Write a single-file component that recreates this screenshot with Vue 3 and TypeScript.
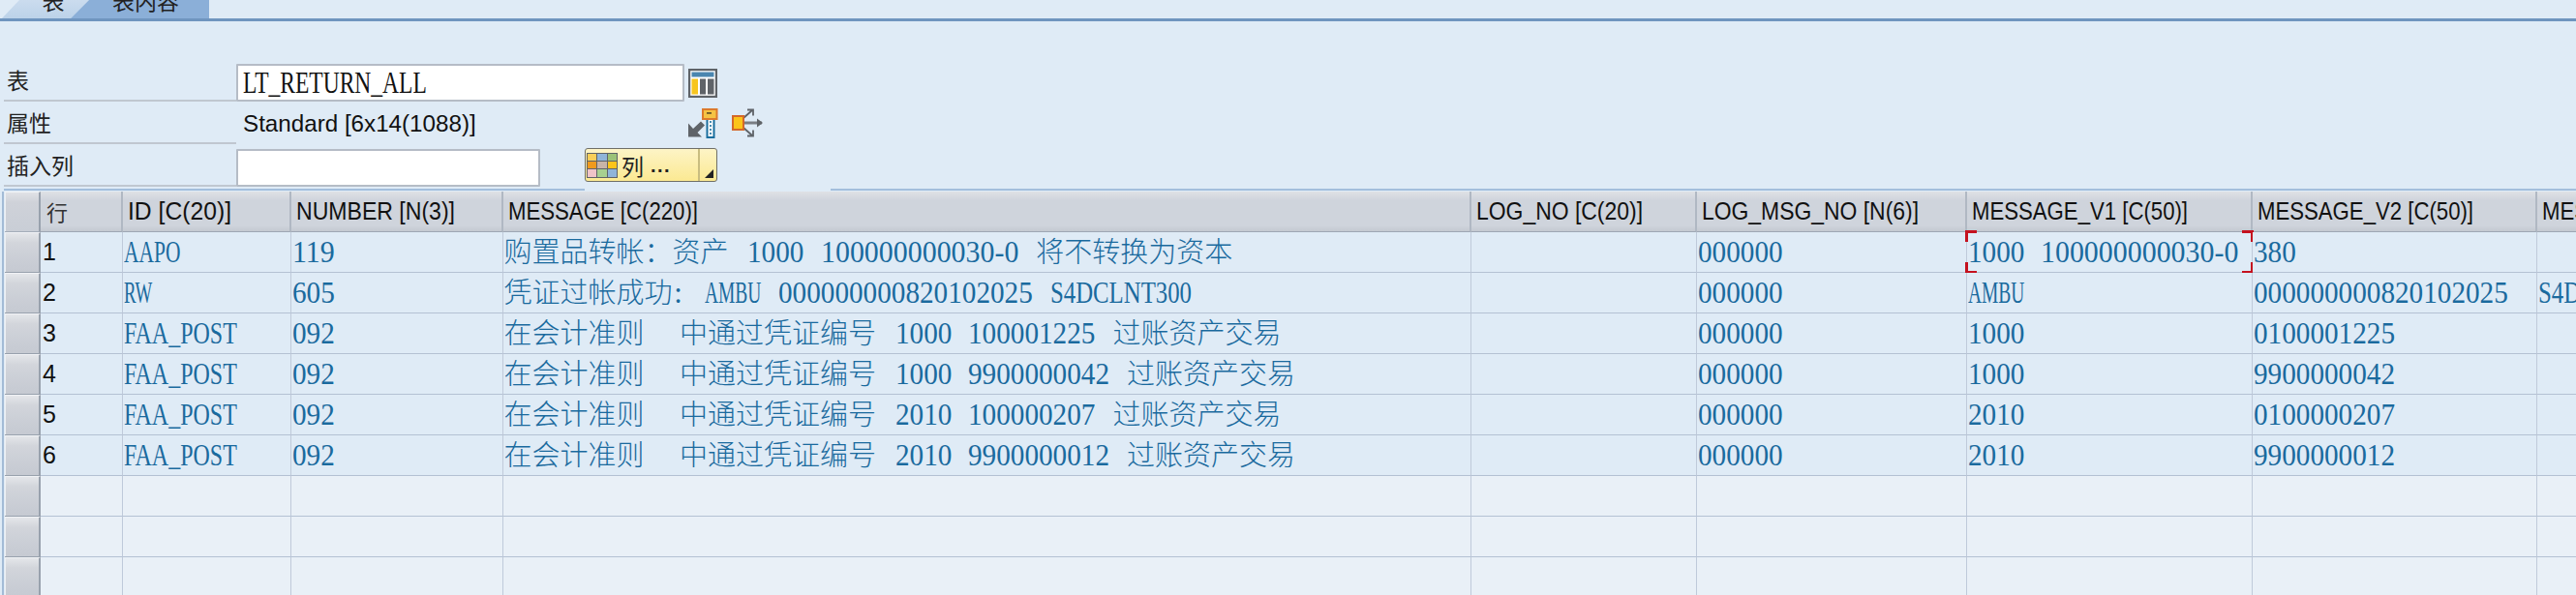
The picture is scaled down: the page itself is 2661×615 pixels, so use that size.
<script setup lang="ts">
interface Tok { text: string; width: number; scale: number; latin: boolean }

const PITCH = 14.6
const SPACE = 17.5
const CJK = 29.3

const canvas = document.createElement('canvas')
const ctx = canvas.getContext('2d')

function measure(text: string, font: string): number {
  if (!ctx) return 0
  ctx.font = font
  return ctx.measureText(text).width
}

function tokens(s: string): Tok[] {
  const parts = s.match(/ +|[!-~]+|[^ !-~]+/g) || []
  return parts.map((text) => {
    if (text[0] === ' ') return { text, width: text.length * SPACE, scale: 1, latin: false }
    if (/^[!-~]/.test(text)) {
      const width = text.length * PITCH
      const natural = measure(text, '31px "Liberation Serif"')
      return { text, width, scale: text.length > 1 && natural > 0 ? width / natural : 1, latin: true }
    }
    return { text, width: text.length * CJK, scale: 1, latin: false }
  })
}

const headers = [
  { text: 'ID [C(20)]', width: 107 },
  { text: 'NUMBER [N(3)]', width: 164 },
  { text: 'MESSAGE [C(220)]', width: 196 },
  { text: 'LOG_NO [C(20)]', width: 172 },
  { text: 'LOG_MSG_NO [N(6)]', width: 224 },
  { text: 'MESSAGE_V1 [C(50)]', width: 223 },
  { text: 'MESSAGE_V2 [C(50)]', width: 223 },
  { text: 'MESSAGE_V3 [C(50)]', width: 223 },
].map((h) => {
  const natural = measure(h.text, '25px "Liberation Sans"')
  return { text: h.text, scale: natural > 0 ? h.width / natural : 1 }
})

const raw: string[][] = [
  ['AAPO', '119', '购置品转帐：资产 1000 100000000030-0 将不转换为资本', '', '000000', '1000 100000000030-0', '380', ''],
  ['RW', '605', '凭证过帐成功: AMBU 000000000820102025 S4DCLNT300', '', '000000', 'AMBU', '000000000820102025', 'S4DCLNT300'],
  ['FAA_POST', '092', '在会计准则  中通过凭证编号 1000 100001225 过账资产交易', '', '000000', '1000', '0100001225', ''],
  ['FAA_POST', '092', '在会计准则  中通过凭证编号 1000 9900000042 过账资产交易', '', '000000', '1000', '9900000042', ''],
  ['FAA_POST', '092', '在会计准则  中通过凭证编号 2010 100000207 过账资产交易', '', '000000', '2010', '0100000207', ''],
  ['FAA_POST', '092', '在会计准则  中通过凭证编号 2010 9900000012 过账资产交易', '', '000000', '2010', '9900000012', ''],
]

const rows = raw.map((r) => r.map(tokens))
const emptyRows = [1, 2, 3]
const emptyCells = [0, 1, 2, 3, 4, 5, 6, 7]
const inputToks = tokens('LT_RETURN_ALL')
const swatches = ['#f9cf5a', '#8fb4d9', '#9cc278', '#f09a1c', '#c8b4a8', '#fcc419', '#f0c4c8', '#a8d090', '#8fb4d9']
</script>

<template>
  <div class="page">
    <div class="tabbar">
      <div class="tab tab-a"><span>表</span></div>
      <div class="tab tab-b"><span>表内容</span></div>
    </div>

    <div class="form">
      <div class="label">表</div>
      <div class="field">
        <div class="input wide">
          <span v-for="(t, i) in inputToks" :key="i" class="tok" :style="{ width: t.width + 'px' }"><span class="inner" :class="{ latin: t.latin }" :style="{ transform: 'scaleX(' + t.scale + ')' }">{{ t.text }}</span></span>
        </div>
        <svg class="icon table-icon" viewBox="0 0 30 30" width="30" height="30">
          <rect x="1" y="1" width="28" height="28" fill="#fff" stroke="#5f6368" stroke-width="2.4" />
          <rect x="3.5" y="3.5" width="23" height="5" fill="#4a86b0" />
          <rect x="3.5" y="10.5" width="6.5" height="16" fill="#f7c51f" />
          <rect x="12" y="10.5" width="6" height="16" fill="#5f6368" />
          <rect x="20" y="10.5" width="6.5" height="16" fill="#5f6368" />
        </svg>
      </div>

      <div class="label">属性</div>
      <div class="field attr">
        <span class="attr-text">Standard [6x14(1088)]</span>
        <svg class="icon key-icon" viewBox="0 0 31 31" width="31" height="31">
          <path d="M0 15.5 L5 21 L13 13.5 L17 17.5 L9.5 25 L14 29.5 L0 29.5 Z" fill="#5f6368" />
          <rect x="19.5" y="10" width="7" height="20" fill="#fff" stroke="#1a6e9e" stroke-width="2" />
          <path d="M23 13v2M23 17v2M23 21v2M23 25v2" stroke="#1a6e9e" stroke-width="1.6" />
          <rect x="15" y="1" width="14.5" height="10" fill="#f5c344" stroke="#dc7a2c" stroke-width="2" />
          <rect x="19" y="4" width="5" height="1.8" fill="#6b5a2a" />
        </svg>
        <svg class="icon share-icon" viewBox="0 0 33 31" width="33" height="31">
          <path d="M12 15 L31 15" stroke="#7a7e84" stroke-width="3" fill="none" />
          <path d="M26 10.5 L32 15 L26 19.5 Z" fill="#5f6368" />
          <path d="M12 10 L21 2 M16 1.5 L22 1.5 L22 7.5 M12 20 L21 28 M16 28.5 L22 28.5 L22 22.5" stroke="#5f6368" stroke-width="1.8" fill="none" />
          <rect x="1" y="8" width="11" height="14" fill="#fcc419" stroke="#d4682a" stroke-width="2" />
        </svg>
      </div>

      <div class="label">插入列</div>
      <div class="field">
        <div class="input narrow"></div>
        <button class="col-btn" type="button">
          <span class="swatches"><i v-for="(c, i) in swatches" :key="i" :style="{ background: c }"></i></span>
          <span class="btn-text">列</span>
          <span class="btn-dots">...</span>
          <span class="btn-arrow"></span>
        </button>
      </div>
    </div>

    <div class="rule">
      <div class="rule-a"></div>
      <div class="rule-b"></div>
    </div>

    <div class="table">
      <div class="tr head">
        <div class="rowhead head-corner"></div>
        <div class="th num">行</div>
        <div v-for="h in headers" :key="h.text" class="th"><span class="inner" :style="{ transform: 'scaleX(' + h.scale + ')' }">{{ h.text }}</span></div>
      </div>

      <div v-for="(r, ri) in rows" :key="ri" class="tr data">
        <div class="rowhead"></div>
        <div class="td rownum">{{ ri + 1 }}</div>
        <div v-for="(cell, ci) in r" :key="ci" class="td">
          <span v-for="(t, ti) in cell" :key="ti" class="tok" :style="{ width: t.width + 'px' }"><span class="inner" :class="{ latin: t.latin }" :style="{ transform: 'scaleX(' + t.scale + ')' }">{{ t.text }}</span></span>
          <template v-if="ri === 0 && ci === 5">
            <i class="br tl"></i><i class="br tr-c"></i><i class="br bl"></i><i class="br br-c"></i>
          </template>
        </div>
      </div>

      <div v-for="e in emptyRows" :key="'e' + e" class="tr empty">
        <div class="rowhead"></div>
        <div class="td rownum"></div>
        <div v-for="c in emptyCells" :key="c" class="td"></div>
      </div>
    </div>
  </div>
</template>

<style>
html, body { margin: 0; background: #dfebf6; }
</style>

<style scoped>
.page {
  width: 2661px;
  height: 615px;
  overflow: hidden;
  background: #dfebf6;
  font-family: "Liberation Sans", "Noto Sans CJK SC", sans-serif;
  color: #111;
}

.tabbar {
  height: 22px;
  display: flex;
  box-sizing: border-box;
  border-bottom: 3px solid #6f95bf;
  overflow: hidden;
  font-size: 23px;
  background: #dfebf6;
}
.tab { height: 19px; position: relative; display: flex; justify-content: center; }
.tab span { margin-top: -17px; line-height: 38px; color: #222; }
.tab-a {
  width: 92px;
  margin-right: -19px;
  padding-left: 18px;
  box-sizing: border-box;
  background: linear-gradient(#cbdcee, #bcd2e9);
  clip-path: polygon(20px 0, 100% 0, 73px 100%, 2px 100%);
}
.tab-b {
  width: 143px;
  padding-left: 12px;
  box-sizing: border-box;
  background: #8bafd8;
  clip-path: polygon(19px 0, 100% 0, 100% 100%, 0 100%);
}

.form {
  margin: 39px 0 0 4px;
  display: grid;
  grid-template-columns: 240px 1fr;
  grid-auto-rows: 44px;
}
.label {
  border-bottom: 2px solid #c0c7d0;
  font-size: 23px;
  line-height: 47px;
  padding-left: 3px;
  color: #222;
  box-sizing: border-box;
  overflow: hidden;
}
.field { display: flex; align-items: flex-end; }
.input {
  height: 39px;
  box-sizing: border-box;
  background: #fff;
  border: 2px solid #b5bcc6;
  border-radius: 1px;
  padding-left: 5px;
  font: 29px/35px "Liberation Serif", "Noto Sans CJK SC", serif;
  color: #111;
  white-space: pre;
}
.input.wide { width: 463px; }
.input.narrow { width: 314px; }
.icon { display: block; flex: none; }
.table-icon { margin: 0 0 4px 4px; }
.attr { align-items: center; }
.attr-text { width: 460px; margin-left: 7px; font-size: 24.2px; line-height: 43px; white-space: pre; }
.share-icon { margin-left: 14px; }

.col-btn {
  margin: 0 0 5px 46px;
  width: 137px;
  height: 35px;
  padding: 0;
  box-sizing: border-box;
  position: relative;
  display: flex;
  align-items: center;
  border: 1.5px solid #6f6f68;
  border-radius: 3px;
  background: linear-gradient(#fdf4c6, #fbe992);
  font-family: "Noto Sans CJK SC", sans-serif;
  color: #222;
}
.swatches {
  width: 32px;
  height: 26px;
  margin-left: 1px;
  box-sizing: border-box;
  display: grid;
  grid-template: repeat(3, 1fr) / repeat(3, 1fr);
  gap: 1px;
  padding: 1px;
  background: #5f6368;
  flex: none;
}
.swatches i { display: block; }
.btn-text { margin-left: 4px; font-size: 23px; line-height: 30px; }
.btn-dots { margin-left: 7px; font: 700 20px/30px "Liberation Sans", sans-serif; letter-spacing: 1.4px; }
.btn-arrow {
  position: absolute;
  right: 0;
  top: 0;
  bottom: 0;
  width: 17px;
  border-left: 2px solid #c9bd80;
}
.btn-arrow::after {
  content: "";
  position: absolute;
  right: 3px;
  bottom: 3px;
  border-style: solid;
  border-width: 0 0 9px 9px;
  border-color: transparent transparent #222 transparent;
}

.rule { height: 2px; margin-top: 2px; display: flex; margin-left: 4px; }
.rule-a { width: 600px; background: #a3bedc; }
.rule-b { margin-left: 254px; flex: 1; background: #a3bedc; }

.table {
  margin: 1px 0 0 2px;
  border-left: 2px solid #a3bbd6;
}
.tr {
  display: grid;
  grid-template-columns: 38px 84.5px 174px 219px 1000px 233px 279px 295px 294px 60px;
  height: 42px;
  box-sizing: border-box;
  white-space: pre;
}
.rowhead {
  box-sizing: border-box;
  height: 42px;
  margin-left: 1px;
  background: linear-gradient(#e4e6ea 0, #d2d5db 25%, #c8ccd4 80%, #c6cad2 100%);
  border-top: 1px solid #f0f2f5;
  border-bottom: 1px solid #98a1ad;
  border-right: 2px solid #98a1ad;
  box-shadow: inset 1px 0 0 #eef0f3;
}
.head-corner { background: linear-gradient(#e0e2e6 0, #cfd2d9 25%, #c9ced6 100%); border-bottom-color: #a4adb9; }

.th {
  box-sizing: border-box;
  height: 42px;
  padding-left: 5px;
  font-size: 25px;
  line-height: 41px;
  background: linear-gradient(#dfe1e5 0, #cfd4dc 22%, #cfd4dc 85%, #c4c9d1 100%);
  border-right: 2px solid #b0b8c3;
  border-bottom: 1px solid #9ea7b4;
  color: #111;
  overflow: hidden;
}
.th.num { font-family: "Noto Sans CJK SC", sans-serif; font-size: 22px; padding-left: 6px; color: #333; }

.td {
  position: relative;
  box-sizing: border-box;
  height: 42px;
  padding-left: 1px;
  border-right: 1px solid #bfcada;
  border-bottom: 1px solid #b4c1d3;
  font-family: "Liberation Serif", "Noto Sans CJK SC", serif;
  font-size: 29px;
  font-weight: 300;
  line-height: 41px;
  color: #1a6a9e;
}
.data .td { background: #dfebf6; }
.empty .td { background: #e9f0f7; }
.td.rownum {
  font-family: "Liberation Sans", sans-serif;
  font-size: 25px;
  font-weight: 400;
  line-height: 40px;
  color: #111;
  padding-left: 2px;
}

.tok { display: inline-block; white-space: pre; }
.inner { display: inline-block; transform-origin: left center; }
.inner.latin { font-size: 31px; }

.br { position: absolute; width: 9px; height: 9px; border: 0 solid #c4121f; }
.tl { left: -2px; top: -2px; border-width: 3px 0 0 3px; }
.tr-c { right: -2px; top: -2px; border-width: 3px 3px 0 0; }
.bl { left: -2px; bottom: -2px; border-width: 0 0 3px 3px; }
.br-c { right: -2px; bottom: -2px; border-width: 0 3px 3px 0; }
</style>
